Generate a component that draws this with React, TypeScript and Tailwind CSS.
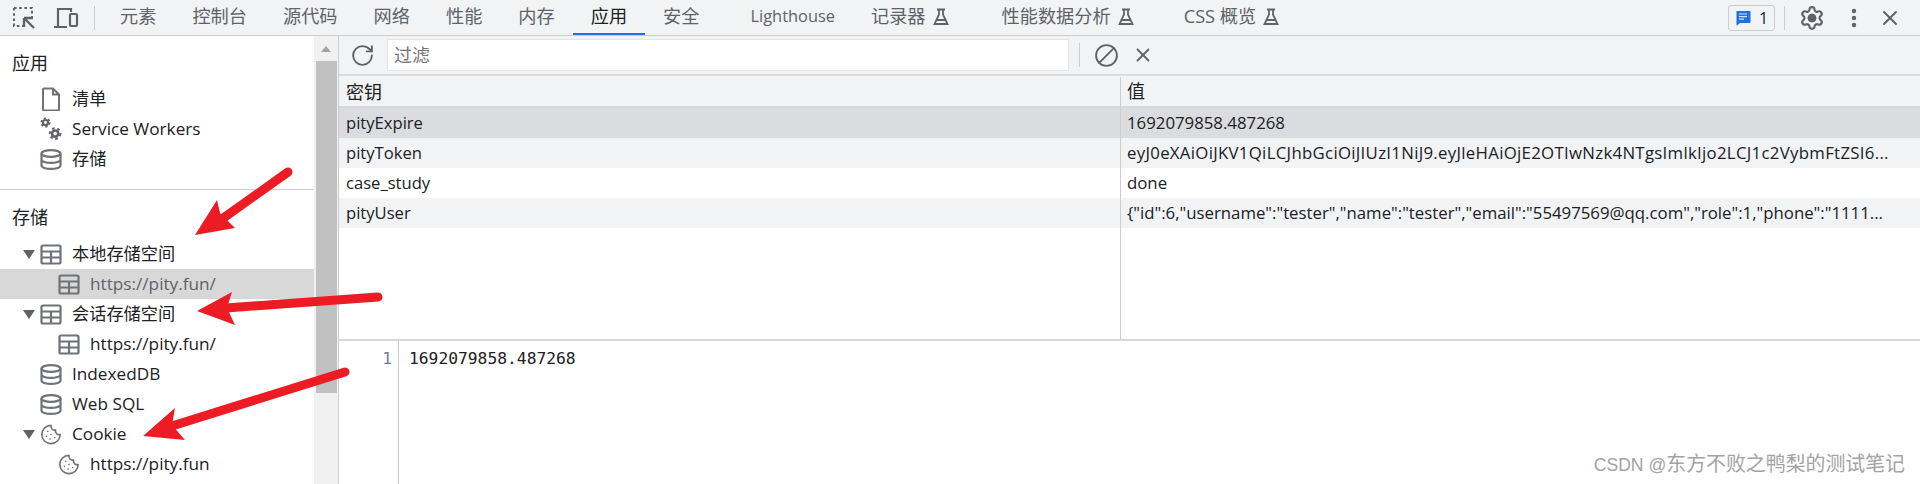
import { Ban, Cookie, EllipsisVertical, RotateCw, Settings, X } from 'lucide-react';

const SANS = "font-['Open_Sans','Noto_Sans_CJK_SC',sans-serif]";

function FlaskIcon() {
  return (
    <svg width="20" height="20" viewBox="0 0 20 20" fill="none" stroke="#5f6368" strokeWidth="1.8">
      <path d="M6 2.5h8M8 2.5v5L3.5 17h13L12 7.5v-5M6 13h8" />
    </svg>
  );
}

function TableIcon() {
  return (
    <svg width="22" height="21" viewBox="0 0 22 21" fill="none" stroke="#6f7377" strokeWidth="2.2">
      <rect x="1.5" y="1.5" width="19" height="18" rx="1.5" />
      <path d="M1.5 7.5h19M1.5 13.5h19M11 7.5v12" />
    </svg>
  );
}

function DatabaseIcon() {
  return (
    <svg width="22" height="21" viewBox="0 0 22 21" fill="none" stroke="#6f7377" strokeWidth="2.2">
      <ellipse cx="11" cy="4.5" rx="9.5" ry="3.4" />
      <path d="M1.5 4.5v12c0 1.9 4.3 3.4 9.5 3.4s9.5-1.5 9.5-3.4v-12M1.5 10.5c0 1.9 4.3 3.4 9.5 3.4s9.5-1.5 9.5-3.4" />
    </svg>
  );
}

function FileIcon() {
  return (
    <svg width="20" height="24" viewBox="0 0 20 24" fill="none" stroke="#6f7377" strokeWidth="2">
      <path d="M2 2.5a1 1 0 0 1 1-1h9l6 6v15a1 1 0 0 1-1 1H3a1 1 0 0 1-1-1zM12 1.5v6h6" />
    </svg>
  );
}

function GearsIcon() {
  return (
    <svg width="24" height="26" viewBox="0 0 24 26" fill="none" stroke="#5f6368">
      <circle cx="6" cy="6" r="2.8" strokeWidth="2.4" />
      <circle cx="6" cy="6" r="4.6" strokeWidth="1.8" strokeDasharray="2.4 2.4" />
      <circle cx="16.5" cy="18" r="3.4" strokeWidth="2.8" />
      <circle cx="16.5" cy="18" r="5.8" strokeWidth="2.2" strokeDasharray="2.9 2.9" />
    </svg>
  );
}

function InspectIcon() {
  return (
    <svg width="24" height="24" viewBox="0 0 24 24" fill="none" stroke="#5f6368" strokeWidth="2">
      <path d="M2 2h18v9M2 2v18h9" strokeDasharray="2.6 2.6" />
      <path d="M12 12h9M12 12v9M12 12l10 10" strokeWidth="2.4" />
    </svg>
  );
}

function DeviceIcon() {
  return (
    <svg width="26" height="22" viewBox="0 0 26 22" fill="none" stroke="#5f6368" strokeWidth="2.2">
      <path d="M5 19V2h13v3M1 20h13" />
      <rect x="17" y="7" width="7" height="12" rx="1" />
    </svg>
  );
}

function MessageIcon() {
  return (
    <svg width="16" height="16" viewBox="0 0 16 16">
      <path d="M1.5 1h13a1 1 0 0 1 1 1v10a1 1 0 0 1-1 1H5l-3.5 2.8z" fill="#1a73e8" />
      <path d="M4 4h8M4 6.6h8M4 9.2h5" stroke="#d2e3fc" strokeWidth="1.2" />
    </svg>
  );
}

function Tab({
  label,
  active,
  flask,
  className = 'text-[18.2px]',
}: {
  label: string;
  active?: boolean;
  flask?: boolean;
  className?: string;
}) {
  return (
    <div
      className={`flex h-full items-center gap-[5px] border-b-2 px-[18px] ${
        active ? 'border-[#1a73e8] text-[#202124]' : 'border-transparent text-[#5f6368]'
      } ${className}`}
    >
      <span>{label}</span>
      {flask && <FlaskIcon />}
    </div>
  );
}

function SectionTitle({ label }: { label: string }) {
  return <div className="flex h-[48px] items-center pl-[12px] pt-[6px] text-[18px] text-[#202124]">{label}</div>;
}

function TreeRow({
  icon,
  label,
  expanded,
  nested,
  selected,
}: {
  icon: React.ReactNode;
  label?: string;
  expanded?: boolean;
  nested?: boolean;
  selected?: boolean;
}) {
  return (
    <div
      className={`flex h-[30px] shrink-0 items-center whitespace-nowrap text-[17.2px] ${
        nested ? 'pl-[58px]' : 'pl-[23px]'
      } ${selected ? 'bg-[#d8d8d8] text-[#5f6368]' : 'text-[#202124]'}`}
    >
      {!nested && (
        <span className="flex w-[17px] shrink-0 items-center">
          {expanded && <span className="h-0 w-0 border-x-[6px] border-t-[9px] border-x-transparent border-t-[#5f6368]" />}
        </span>
      )}
      <span className="flex w-[22px] shrink-0 items-center justify-center">{icon}</span>
      {label && <span className="ml-[10px]">{label}</span>}
    </div>
  );
}

function DataRow({ k, v, className, valueClass = '' }: { k: string; v: string; className: string; valueClass?: string }) {
  return (
    <div className={`flex h-[30px] shrink-0 items-center whitespace-nowrap text-[16.6px] text-[#202124] ${className}`}>
      <div className="w-[782px] shrink-0 border-r border-[#cbcdd1] pl-[7px] leading-[30px]">{k}</div>
      <div className={`min-w-0 flex-1 overflow-hidden pl-[6px] text-[16.8px] ${valueClass}`}>{v}</div>
    </div>
  );
}

function Arrow({ points, tail, notch }: { points: string; tail: [number, number]; notch: [number, number] }) {
  return (
    <>
      <line x1={tail[0]} y1={tail[1]} x2={notch[0]} y2={notch[1]} stroke="#ed1c24" strokeWidth="9" strokeLinecap="round" />
      <polygon points={points} fill="#ed1c24" />
    </>
  );
}

const db = <DatabaseIcon />;
const table = <TableIcon />;
const cookie = <Cookie size={27} color="#6f7377" strokeWidth={1.8} />;

export default function App() {
  return (
    <div className={`relative h-[484px] w-[1920px] overflow-hidden bg-white ${SANS}`}>
      <header className="flex h-[36px] items-stretch border-b border-[#cbcdd1] bg-[#f1f3f4]">
        <div className="flex items-center pl-[12px]">
          <InspectIcon />
          <span className="ml-[17px]">
            <DeviceIcon />
          </span>
          <span className="ml-[15px] h-[24px] w-px bg-[#cbcdd1]" />
        </div>
        <div className="ml-[7px] flex items-stretch">
          <Tab label="元素" />
          <Tab label="控制台" />
          <Tab label="源代码" />
          <Tab label="网络" />
          <Tab label="性能" />
          <Tab label="内存" />
          <Tab label="应用" active />
          <Tab label="安全" />
          <Tab label="Lighthouse" className="ml-[15px] text-[16.4px]" />
          <Tab label="记录器" flask />
          <Tab label="性能数据分析" flask className="ml-[15px] text-[18.2px]" />
          <Tab label="CSS 概览" flask className="ml-[12px] text-[18.2px]" />
        </div>
        <div className="ml-auto flex items-center">
          <div className="flex h-[26px] w-[47px] items-center justify-center gap-[8px] rounded-[3px] border border-[#cbcdd1] text-[16px] text-[#202124]">
            <MessageIcon />
            <span>1</span>
          </div>
          <span className="ml-[9px] h-[24px] w-px bg-[#cbcdd1]" />
          <Settings size={26} color="#5f6368" strokeWidth={2} className="ml-[14px]" fill="none">
            <circle cx="12" cy="12" r="3" fill="#5f6368" />
          </Settings>
          <EllipsisVertical size={24} color="#5f6368" strokeWidth={2.4} className="ml-[17px]" />
          <X size={24} color="#5f6368" strokeWidth={2} className="ml-[12px] mr-[18px]" />
        </div>
      </header>

      <div className="flex h-[448px]">
        <aside className="flex w-[339px] shrink-0 border-r border-[#cbcdd1]">
          <div className="w-[314px] shrink-0 overflow-hidden">
            <SectionTitle label="应用" />
            <TreeRow icon={<FileIcon />} label="清单" />
            <TreeRow icon={<GearsIcon />} label="Service Workers" />
            <TreeRow icon={db} label="存储" />
            <div className="mt-[15px] border-t border-[#cbcdd1]" />
            <SectionTitle label="存储" />
            <div className="h-px" />
            <TreeRow icon={table} label="本地存储空间" expanded />
            <TreeRow icon={table} label="https://pity.fun/" nested selected />
            <TreeRow icon={table} label="会话存储空间" expanded />
            <TreeRow icon={table} label="https://pity.fun/" nested />
            <TreeRow icon={db} label="IndexedDB" />
            <TreeRow icon={db} label="Web SQL" />
            <TreeRow icon={cookie} label="Cookie" expanded />
            <TreeRow icon={cookie} label="https://pity.fun" nested />
            <TreeRow icon={db} />
          </div>
          <div className="flex w-[24px] shrink-0 flex-col items-center bg-[#f1f1f1]">
            <div className="flex h-[25px] shrink-0 items-center">
              <span className="h-0 w-0 border-x-[5px] border-b-[6px] border-x-transparent border-b-[#a3a3a3]" />
            </div>
            <div className="h-[332px] w-[21px] bg-[#c1c1c1]" />
          </div>
        </aside>

        <main className="flex min-w-0 flex-1 flex-col">
          <div className="flex h-[40px] shrink-0 items-center border-b-2 border-[#d9dbde] bg-[#f1f3f4]">
            <RotateCw size={25} color="#5f6368" strokeWidth={1.8} className="ml-[11px]" />
            <div className="ml-[13px] flex h-[30px] w-[680px] items-center bg-white pl-[6px] text-[18px] text-[#757575] shadow-[0_0_0_1px_#e3e4e6]">
              过滤
            </div>
            <span className="ml-[11px] h-[24px] w-px bg-[#cbcdd1]" />
            <Ban size={25} color="#5f6368" strokeWidth={1.8} className="ml-[14px] -scale-x-100" />
            <X size={22} color="#5f6368" strokeWidth={2} className="ml-[13px]" />
          </div>

          <div className="flex h-[265px] shrink-0 flex-col border-b-2 border-[#d5d7da] bg-[linear-gradient(to_right,transparent_781px,#cbcdd1_781px,#cbcdd1_782px,transparent_782px)]">
            <div className="flex h-[32px] shrink-0 items-center border-b-2 border-[#d5d7da] bg-[#f1f3f4] pt-[1px] text-[18px] text-[#202124]">
              <div className="w-[782px] shrink-0 border-r border-[#cbcdd1] pl-[7px] leading-[30px]">密钥</div>
              <div className="pl-[6px]">值</div>
            </div>
            <DataRow k="pityExpire" v="1692079858.487268" className="bg-[#dadce0]" />
            <DataRow
              k="pityToken"
              v="eyJ0eXAiOiJKV1QiLCJhbGciOiJIUzI1NiJ9.eyJleHAiOjE2OTIwNzk4NTgsImlkIjo2LCJ1c2VybmFtZSI6..."
              className="bg-[#f1f3f4]"
              valueClass="tracking-[0.3px]"
            />
            <DataRow k="case_study" v="done" className="bg-white" />
            <DataRow
              k="pityUser"
              v={'{"id":6,"username":"tester","name":"tester","email":"55497569@qq.com","role":1,"phone":"1111...'}
              className="bg-[#f1f3f4]"
            />
          </div>

          <div className="flex min-h-0 flex-1 font-['DejaVu_Sans_Mono',monospace] text-[16.3px]">
            <div className="w-[60px] shrink-0 border-r border-[#cbcdd1] pr-[6px] pt-[6px] text-right text-[#6b7f96]">1</div>
            <div className="pl-[10px] pt-[6px] text-[#202124]">1692079858.487268</div>
          </div>
        </main>
      </div>

      <svg className="pointer-events-none absolute left-0 top-0" width="1920" height="484">
        <Arrow points="195,235 217,200 220,213 235,228" tail={[288, 172]} notch={[222, 219]} />
        <Arrow points="197,311 232,292 227,308 235,325" tail={[378, 297]} notch={[226, 308]} />
        <Arrow points="143,436 175,408 172,425 185,440" tail={[345, 372]} notch={[172, 426]} />
      </svg>

      <div className="absolute right-[15px] top-[450px] font-['Liberation_Sans','Noto_Sans_CJK_SC',sans-serif] text-[19.9px] text-[#a3a3a3]">
        <span className="text-[17.6px]">CSDN @</span>东方不败之鸭梨的测试笔记
      </div>
    </div>
  );
}
